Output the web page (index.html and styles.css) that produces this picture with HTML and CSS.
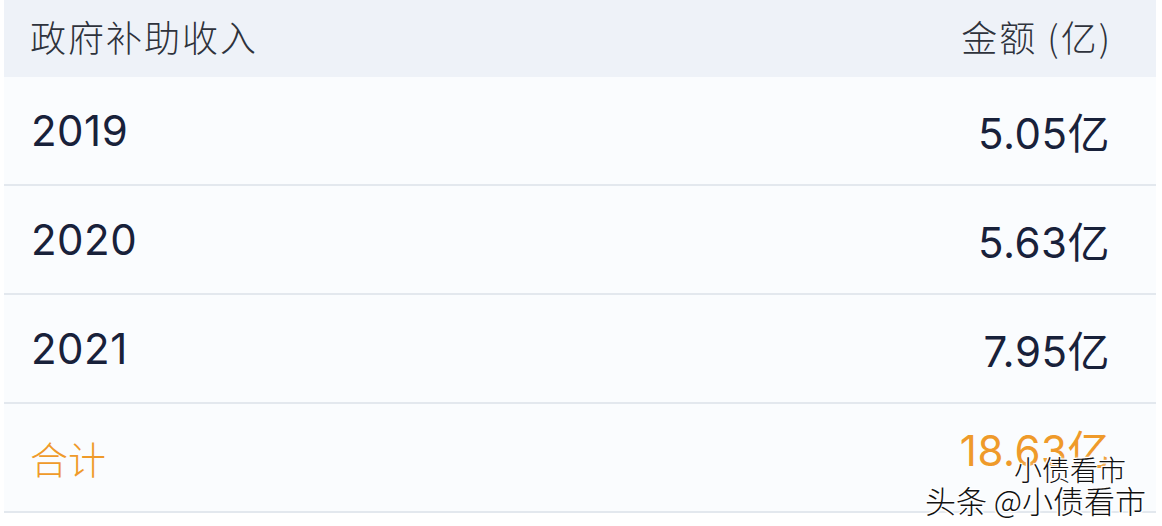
FILE: index.html
```html
<!DOCTYPE html>
<html lang="zh-CN">
<head>
<meta charset="utf-8">
<link rel="stylesheet" href="styles.css">
</head>
<body>
<div class="page">
  <div class="table">
    <div class="row head">
      <span class="cell-l">政府补助收入</span>
      <span class="cell-r">金额 (亿)</span>
    </div>
    <div class="row">
      <span class="cell-l num">2019</span>
      <span class="cell-r num">5.05亿</span>
    </div>
    <div class="row">
      <span class="cell-l num">2020</span>
      <span class="cell-r num">5.63亿</span>
    </div>
    <div class="row">
      <span class="cell-l num">2021</span>
      <span class="cell-r num">7.95亿</span>
    </div>
    <div class="row total">
      <span class="cell-l">合计</span>
      <span class="cell-r num">18.63亿</span>
    </div>
  </div>
  <div class="watermark">
    <span class="wm-small">小债看市</span>
    <span class="wm-big">头条 @小债看市</span>
  </div>
</div>
</body>
</html>
```

FILE: styles.css
```css
html, body {
  margin: 0;
  padding: 0;
  background: #ffffff;
}
.page {
  position: relative;
  width: 1162px;
  height: 526px;
  overflow: hidden;
  background: #ffffff;
  font-family: Inter, "Noto Sans CJK SC", sans-serif;
}
.table {
  margin-left: 4px;
  width: 1152px;
  display: flex;
  flex-direction: column;
}
.row {
  display: flex;
  justify-content: space-between;
  align-items: center;
  height: 109px;
  padding: 0 46px 0 26px;
  background: #fafcfe;
  border-bottom: 2px solid #e3e8ee;
  box-sizing: border-box;
}
.row.head {
  height: 77px;
  background: #eef2f8;
  border-bottom: none;
  color: #2e333c;
  font-family: "Noto Sans CJK SC", sans-serif;
  font-weight: 300;
  font-size: 36px;
  letter-spacing: 2px;
  padding-bottom: 5px;
  padding-right: 44px;
}
.num {
  font-family: Inter, "Noto Sans CJK SC", sans-serif;
  font-size: 42px;
  font-weight: 400;
  letter-spacing: 0.5px;
  color: #18213a;
}
.row .cell-l.num {
  padding-left: 1px;
}
.row.total .cell-l {
  font-family: "Noto Sans CJK SC", sans-serif;
  font-weight: 300;
  font-size: 38px;
  color: #ef9a2a;
}
.row.total .cell-r {
  color: #ef9a2a;
  transform: translateY(-10px);
}
.watermark {
  position: absolute;
  right: 16px;
  top: 455px;
  display: flex;
  flex-direction: column;
  align-items: flex-end;
  font-family: "Noto Sans CJK SC", sans-serif;
  font-weight: 300;
  color: #111111;
  line-height: 1;
  text-shadow: 0 0 2px #fff, 0 0 3px #fff, 0 0 5px #fff, 1px 1px 0 #fff, -1px -1px 0 #fff, 1px -1px 0 #fff, -1px 1px 0 #fff;
}
.wm-small {
  font-size: 28px;
  margin-right: 20px;
}
.wm-big {
  font-size: 31px;
  margin-top: 1px;
}
```
